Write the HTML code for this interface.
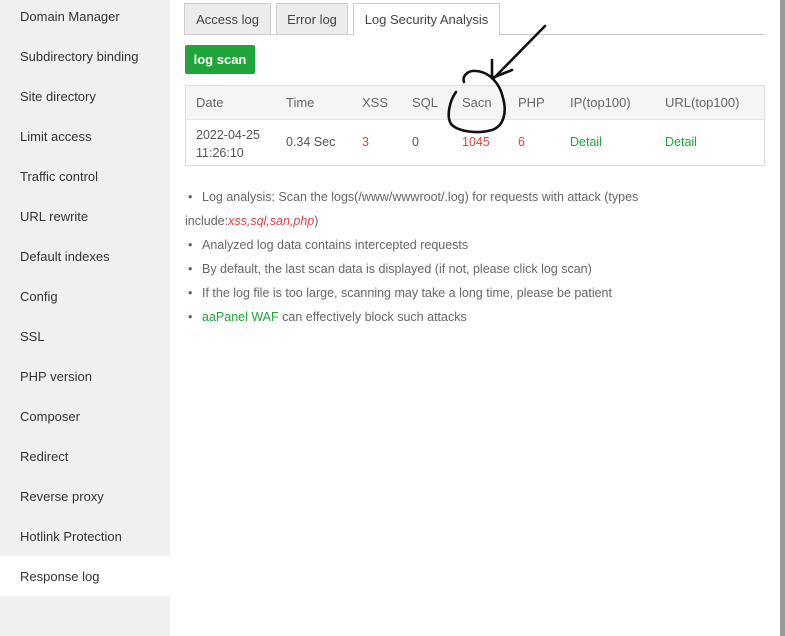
<!DOCTYPE html>
<html><head><style>
body{margin:0;width:785px;height:636px;overflow:hidden;font-family:"Liberation Sans",sans-serif;background:#fff;position:relative;color:#555;}
.side{position:absolute;left:0;top:0;width:170px;height:636px;background:#f0f0f0;}
.side .it{position:absolute;left:20px;font-size:13px;color:#333;}
.act{position:absolute;left:0;top:556px;width:170px;height:40px;background:#fff;}
.rs{position:absolute;left:780px;top:0;width:5px;height:636px;background:#9a9a9a;}
.tab{position:absolute;top:3px;height:31px;border:1px solid #ccc;border-bottom:none;background:#ececec;font-size:13px;color:#444;line-height:32px;text-align:center;box-sizing:border-box;}
.t{position:absolute;font-size:13px;}
.b{position:relative;padding-left:17px}
.b:before{content:"•";position:absolute;left:3px;}
</style></head><body>
<div class="side">
<div class="act"></div>
<div class="it" style="top:9px">Domain Manager</div>
<div class="it" style="top:49px">Subdirectory binding</div>
<div class="it" style="top:89px">Site directory</div>
<div class="it" style="top:129px">Limit access</div>
<div class="it" style="top:169px">Traffic control</div>
<div class="it" style="top:209px">URL rewrite</div>
<div class="it" style="top:249px">Default indexes</div>
<div class="it" style="top:289px">Config</div>
<div class="it" style="top:329px">SSL</div>
<div class="it" style="top:369px">PHP version</div>
<div class="it" style="top:409px">Composer</div>
<div class="it" style="top:449px">Redirect</div>
<div class="it" style="top:489px">Reverse proxy</div>
<div class="it" style="top:529px">Hotlink Protection</div>
<div class="it" style="top:569px">Response log</div>
</div>
<div class="rs"></div>
<div style="position:absolute;left:184px;top:34px;width:581px;height:1px;background:#ccc"></div>
<div class="tab" style="left:184px;width:87px">Access log</div>
<div class="tab" style="left:276px;width:72px">Error log</div>
<div class="tab" style="left:353px;width:147px;background:#fff;height:32px">Log Security Analysis</div>
<div style="position:absolute;left:185px;top:45px;width:70px;height:29px;background:#20a53a;border-radius:2px;color:#fff;font-size:13px;font-weight:bold;line-height:29px;text-align:center">log scan</div>
<div style="position:absolute;left:185px;top:85px;width:578px;height:79px;border:1px solid #ddd"></div>
<div style="position:absolute;left:186px;top:86px;width:578px;height:33px;background:#f5f5f5;border-bottom:1px solid #e4e4e4"></div>
<div class="t" style="left:196px;top:95px;color:#666">Date</div>
<div class="t" style="left:286px;top:95px;color:#666">Time</div>
<div class="t" style="left:362px;top:95px;color:#666">XSS</div>
<div class="t" style="left:412px;top:95px;color:#666">SQL</div>
<div class="t" style="left:462px;top:95px;color:#666">Sacn</div>
<div class="t" style="left:518px;top:95px;color:#666">PHP</div>
<div class="t" style="left:570px;top:95px;color:#666">IP(top100)</div>
<div class="t" style="left:665px;top:95px;color:#666">URL(top100)</div>
<div class="t" style="left:196px;top:126px;line-height:18px;font-size:12.5px">2022-04-25<br>11:26:10</div>
<div class="t" style="left:286px;top:135px;font-size:12.5px">0.34 Sec</div>
<div class="t" style="left:362px;top:135px;color:#d44;font-size:12.5px">3</div>
<div class="t" style="left:412px;top:135px;font-size:12.5px">0</div>
<div class="t" style="left:462px;top:135px;color:#d44;font-size:12.5px">1045</div>
<div class="t" style="left:518px;top:135px;color:#d44;font-size:12.5px">6</div>
<div class="t" style="left:570px;top:135px;color:#20a53a;font-size:12.5px">Detail</div>
<div class="t" style="left:665px;top:135px;color:#20a53a;font-size:12.5px">Detail</div>
<div style="position:absolute;left:185px;top:185px;font-size:12.5px;color:#666;line-height:24px">
<div class="b">Log analysis: Scan the logs(/www/wwwroot/.log) for requests with attack (types</div>
<div>include:<i style="color:#d44">xss,sql,san,php</i>)</div>
<div class="b">Analyzed log data contains intercepted requests</div>
<div class="b">By default, the last scan data is displayed (if not, please click log scan)</div>
<div class="b">If the log file is too large, scanning may take a long time, please be patient</div>
<div class="b"><span style="color:#20a53a">aaPanel WAF</span> can effectively block such attacks</div>
</div>
<svg style="position:absolute;left:0;top:0" width="785" height="636" fill="none" stroke="#111" stroke-width="2.6" stroke-linecap="round" stroke-linejoin="round">
<path d="M464 82 C462 76 468 70 476 71 C490 72 500 84 503 98 C507 112 504 126 492 130 C478 134 458 132 451 124 C446 116 450 100 456 92"/>
<path d="M545 26 L494 78"/>
<path d="M492 60 L492 78 L512 70"/>
</svg>
</body></html>
